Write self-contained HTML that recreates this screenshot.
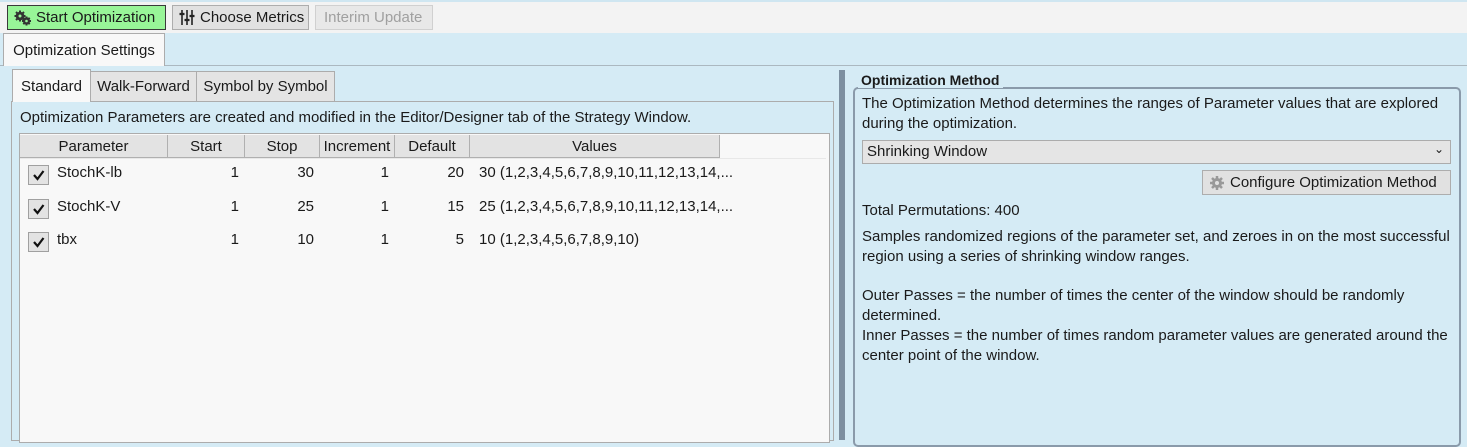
<!DOCTYPE html>
<html><head><style>
*{box-sizing:border-box;margin:0;padding:0}
body{width:1467px;height:440px;overflow:hidden;background:#d5ebf5;font-family:"Liberation Sans",sans-serif;font-size:15px;color:#1a1a1a;position:relative}
.a{position:absolute}
.btn{position:absolute;top:5px;height:25px;border:1px solid #adadad;background:#e1e1e1;display:flex;align-items:center;padding-left:6px;white-space:nowrap}
.tab{position:absolute;border:1px solid #acacac;background:#e4e4e4;display:flex;align-items:center;justify-content:center}
.hd{position:absolute;top:135px;height:23px;background:#e3e3e3;border-right:1px solid #b0b0b0;border-bottom:1px solid #b0b0b0;display:flex;align-items:center;justify-content:center}
.cb{position:absolute;left:28px;width:21px;height:20px;border:1px solid #a0a0a0;background:#e3e3e3}
.t{position:absolute;white-space:nowrap}
.r{text-align:right}
</style></head><body>
<div class="a" style="left:0;top:0;width:1467px;height:33px;background:#f3f3f3;border-top:2px solid #cfe6f1"></div>
<div class="btn" style="left:7px;width:159px;background:#98f598;border:1px solid #3a3a3a">
<svg width="18" height="16" viewBox="0 0 18 16"><g fill="#333"><circle cx="6" cy="6" r="4.3"/><circle cx="12.5" cy="11" r="3.6"/></g><g stroke="#333" stroke-width="2"><path d="M6 0.5v11M0.5 6h11M2 2l8 8M10 2l-8 8"/><path d="M12.5 6.5v9M8 11h9M9.3 7.8l6.4 6.4M15.7 7.8l-6.4 6.4"/></g><g fill="#98f598"><circle cx="6" cy="6" r="1.5"/><circle cx="12.5" cy="11" r="1.3"/></g></svg>
<span style="margin-left:4px">Start Optimization</span></div>
<div class="btn" style="left:172px;width:137px">
<svg width="16" height="17" viewBox="0 0 16 17"><g stroke="#222" stroke-width="1.6"><path d="M3 1v15M8 1v15M13 1v15"/><path d="M0.5 5h5M5.5 11h5M10.5 7h5" stroke-width="2.2"/></g></svg>
<span style="margin-left:5px">Choose Metrics</span></div>
<div class="btn" style="left:315px;width:118px;color:#a0a0a0;border-color:#d0d0d0;background:#e8e8e8;padding-left:8px">Interim Update</div>
<div class="a" style="left:0;top:65px;width:1467px;height:1px;background:#abb8c0"></div>
<div class="tab" style="left:3px;top:33px;width:162px;height:33px;background:#f8f8f8;border-bottom:none">Optimization Settings</div>
<div class="a" style="left:11px;top:101px;width:823px;height:340px;border:1px solid #acacac"></div>
<div class="tab" style="left:90px;top:71px;width:107px;height:31px">Walk-Forward</div>
<div class="tab" style="left:196px;top:71px;width:139px;height:31px">Symbol by Symbol</div>
<div class="tab" style="left:12px;top:69px;width:79px;height:33px;background:#f8f8f8;border-bottom:none">Standard</div>
<div class="t" style="left:20px;top:109px">Optimization Parameters are created and modified in the Editor/Designer tab of the Strategy Window.</div>
<div class="a" style="left:19px;top:133px;width:811px;height:310px;background:#f8f8f8;border:1px solid #acacac"></div>
<div class="a" style="left:20px;top:158px;width:806px;height:1px;background:#e8e8e8"></div>
<div class="hd" style="left:20px;width:148px">Parameter</div>
<div class="hd" style="left:168px;width:77px">Start</div>
<div class="hd" style="left:245px;width:75px">Stop</div>
<div class="hd" style="left:320px;width:75px">Increment</div>
<div class="hd" style="left:395px;width:75px">Default</div>
<div class="hd" style="left:470px;width:250px">Values</div>
<div class="cb" style="top:165px"></div><div class="cb" style="top:199px"></div><div class="cb" style="top:232px"></div>
<svg class="a" style="left:28px;top:165px" width="21" height="90"><g stroke="#111" stroke-width="2.2" fill="none"><path d="M6 10l3.5 4 6-8"/><path d="M6 44l3.5 4 6-8"/><path d="M6 77l3.5 4 6-8"/></g></svg>
<div class="t" style="left:57px;top:164px">StochK-lb</div>
<div class="t" style="left:57px;top:198px">StochK-V</div>
<div class="t" style="left:57px;top:231px">tbx</div>
<div class="t r" style="left:168px;width:71px;top:164px">1</div><div class="t r" style="left:168px;width:71px;top:198px">1</div><div class="t r" style="left:168px;width:71px;top:231px">1</div>
<div class="t r" style="left:245px;width:69px;top:164px">30</div><div class="t r" style="left:245px;width:69px;top:198px">25</div><div class="t r" style="left:245px;width:69px;top:231px">10</div>
<div class="t r" style="left:320px;width:69px;top:164px">1</div><div class="t r" style="left:320px;width:69px;top:198px">1</div><div class="t r" style="left:320px;width:69px;top:231px">1</div>
<div class="t r" style="left:395px;width:69px;top:164px">20</div><div class="t r" style="left:395px;width:69px;top:198px">15</div><div class="t r" style="left:395px;width:69px;top:231px">5</div>
<div class="t" style="left:479px;top:164px">30 (1,2,3,4,5,6,7,8,9,10,11,12,13,14,...</div>
<div class="t" style="left:479px;top:198px">25 (1,2,3,4,5,6,7,8,9,10,11,12,13,14,...</div>
<div class="t" style="left:479px;top:231px">10 (1,2,3,4,5,6,7,8,9,10)</div>
<div class="a" style="left:839px;top:70px;width:6px;height:370px;background:#7d8fa0"></div>
<div class="a" style="left:853px;top:87px;width:608px;height:360px;border:2px solid #8a9aaa;border-radius:5px"></div>
<div class="t" style="left:858px;top:72px;background:#d5ebf5;padding:0 4px 0 3px;font-weight:bold;font-size:14px">Optimization Method</div>
<div class="t" style="left:862px;top:94px;line-height:20px">The Optimization Method determines the ranges of Parameter values that are explored<br>during the optimization.</div>
<div class="a" style="left:862px;top:140px;width:589px;height:24px;background:#e5e5e5;border:1px solid #acacac;padding:2px 4px">Shrinking Window<span style="position:absolute;right:6px;top:1px;font-size:12px">&#8964;</span></div>
<div class="a" style="left:1202px;top:170px;width:249px;height:25px;background:#e1e1e1;border:1px solid #adadad;display:flex;align-items:center;padding-left:6px;white-space:nowrap">
<svg width="16" height="16" viewBox="0 0 16 16"><circle cx="8" cy="8" r="5" fill="#999"/><g stroke="#999" stroke-width="2.5"><path d="M8 1v14M1 8h14M3 3l10 10M13 3L3 13"/></g><circle cx="8" cy="8" r="2" fill="#e1e1e1"/></svg>
<span style="margin-left:5px">Configure Optimization Method</span></div>
<div class="t" style="left:862px;top:202px">Total Permutations: 400</div>
<div class="t" style="left:862px;top:227px;line-height:19.8px">Samples randomized regions of the parameter set, and zeroes in on the most successful<br>region using a series of shrinking window ranges.<br><br>Outer Passes = the number of times the center of the window should be randomly<br>determined.<br>Inner Passes = the number of times random parameter values are generated around the<br>center point of the window.</div>
</body></html>
